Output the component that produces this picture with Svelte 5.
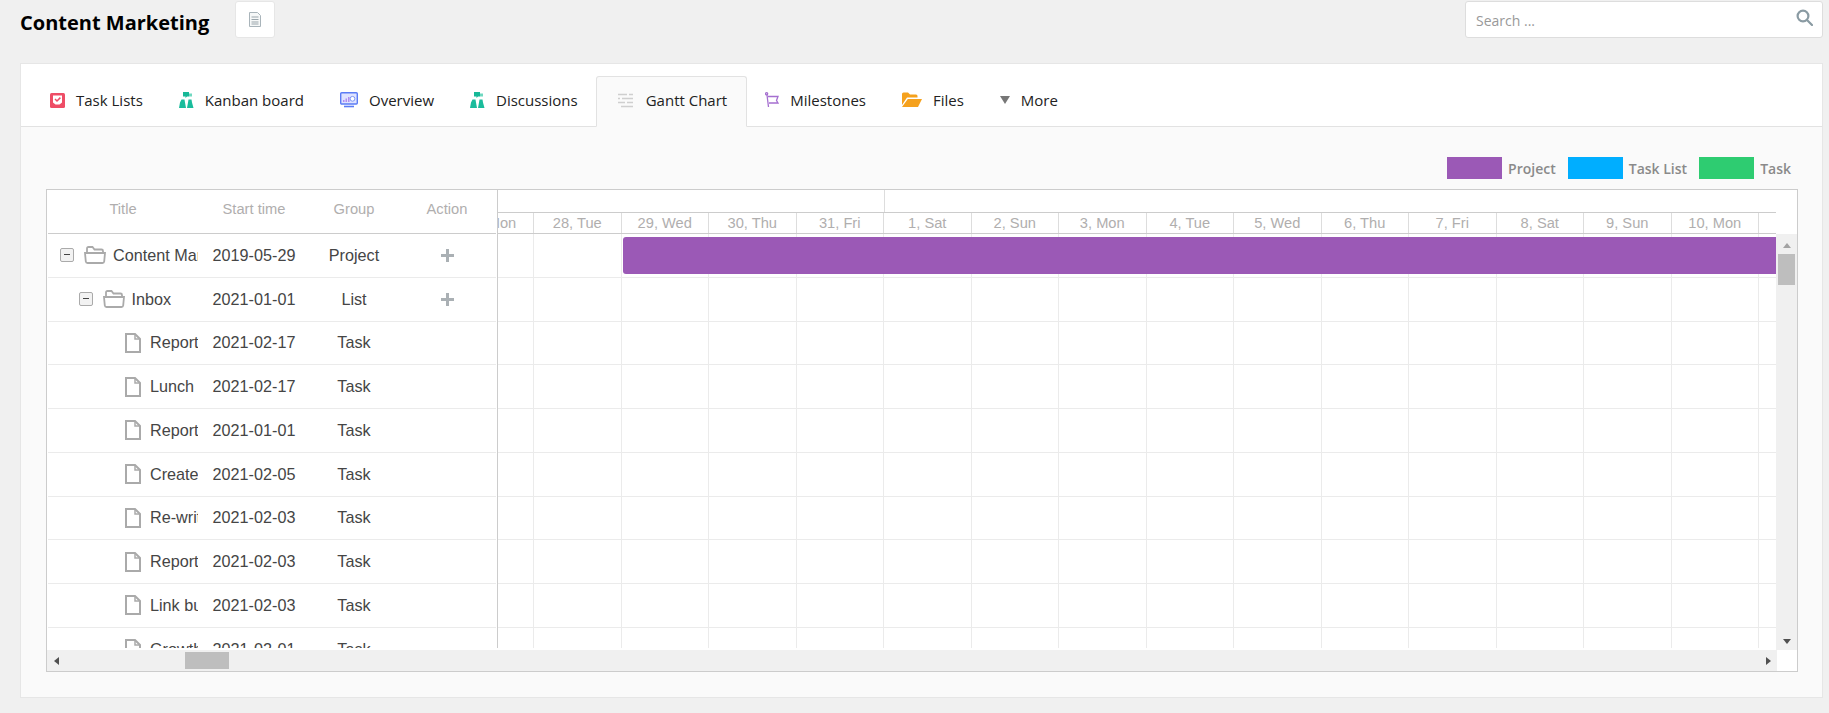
<script>
    const tabs = [
        { label: "Task Lists", icon: "check", w: 15 },
        { label: "Kanban board", icon: "team", w: 15 },
        { label: "Overview", icon: "screen", w: 18 },
        { label: "Discussions", icon: "team", w: 15 },
        { label: "Gantt Chart", icon: "gantt", w: 19, active: true },
        { label: "Milestones", icon: "flag", w: 14 },
        { label: "Files", icon: "folder", w: 20 },
        { label: "More", icon: "more", w: 10 }
    ];

    const legend = [
        { label: "Project", color: "#9b59b6" },
        { label: "Task List", color: "#00aeff" },
        { label: "Task", color: "#2ecc71" }
    ];

    const days = [
        "27, Mon", "28, Tue", "29, Wed", "30, Thu", "31, Fri", "1, Sat", "2, Sun", "3, Mon",
        "4, Tue", "5, Wed", "6, Thu", "7, Fri", "8, Sat", "9, Sun", "10, Mon", "11, Tue"
    ];

    const rows = [
        { title: "Content Marketing", date: "2019-05-29", group: "Project", level: 0, parent: true },
        { title: "Inbox", date: "2021-01-01", group: "List", level: 1, parent: true },
        { title: "Report on sales", date: "2021-02-17", group: "Task", level: 2 },
        { title: "Lunch", date: "2021-02-17", group: "Task", level: 2 },
        { title: "Report on sales", date: "2021-01-01", group: "Task", level: 2 },
        { title: "Create content", date: "2021-02-05", group: "Task", level: 2 },
        { title: "Re-write copy", date: "2021-02-03", group: "Task", level: 2 },
        { title: "Report on sales", date: "2021-02-03", group: "Task", level: 2 },
        { title: "Link building", date: "2021-02-03", group: "Task", level: 2 },
        { title: "Growth plan", date: "2021-02-01", group: "Task", level: 2 }
    ];
</script>

<div class="top">
    <h1>Content Marketing</h1>
    <button class="doc-btn" aria-label="Description">
        <svg width="12" height="15" viewBox="0 0 12 15">
            <path d="M.5.5h8l3 3v11H.5z" fill="#f6f8f8" stroke="#a9b4ba" />
            <path d="M2.5 5h7M2.5 7.5h7M2.5 10h7M2.5 12h7" stroke="#9aa5ab" />
        </svg>
    </button>
    <div class="search">
        <span class="placeholder">Search ...</span>
        <svg width="17" height="17" viewBox="0 0 17 17" fill="none" stroke="#8a9ba3" stroke-width="2.2">
            <circle cx="7" cy="7" r="5.4" />
            <path d="M11 11l5 5" stroke-linecap="round" />
        </svg>
    </div>
</div>

<div class="panel">
    <nav class="tabs">
        {#each tabs as tab}
            <div class="tab" class:active={tab.active}>
                <span class="tab-icon" style="width: {tab.w}px">
                    {#if tab.icon === "check"}
                        <svg width="15" height="15" viewBox="0 0 15 15">
                            <rect width="15" height="15" rx="1.5" fill="#ee4d66" />
                            <path d="M3 2.5h9v7l-2.5 2h-4l-2.5-2z" fill="#fff" />
                            <path d="M5 6l2 2 3.4-3.4" fill="none" stroke="#ee4d66" stroke-width="1.5" />
                        </svg>
                    {:else if tab.icon === "team"}
                        <svg width="15" height="16" viewBox="0 0 15 16">
                            <path d="M4 0h6v4.5H8L6.5 6V4.5H4z" fill="#17b897" />
                            <path d="M10 1.5h3v3h-3z" fill="#6fd8c0" />
                            <path d="M2.5 7.5h3l.5 3 1 5.5H0l1-5.500zM9.500 7.500h3l.5 3 1.500 5.500H8l1-5.500z" fill="#1abc9c" />
                        </svg>
                    {:else if tab.icon === "screen"}
                        <svg width="18" height="16" viewBox="0 0 18 16">
                            <rect x=".7" y=".7" width="16.600" height="11.300" rx="1" fill="#dfe3ff" stroke="#5b7cf5" stroke-width="1.400" />
                            <path d="M3 10V8h1.500v2zM5.500 10V6.500H7V10zM8 10V5h1.500v5z" fill="#b08cf0" />
                            <circle cx="12.500" cy="6.800" r="2.400" fill="#fff" stroke="#7d96f5" />
                            <path d="M4 14.500h10" stroke="#5b7cf5" stroke-width="1.600" />
                        </svg>
                    {:else if tab.icon === "gantt"}
                        <svg width="15" height="15" viewBox="0 0 15 15" stroke="#cfcfcf" stroke-width="1.600">
                            <path d="M0 1.500h9M11 1.500h4M4 5.500h11M0 5.500h2M0 9.500h7M9 9.500h6M3 13.500h12" />
                        </svg>
                    {:else if tab.icon === "flag"}
                        <svg width="14" height="16" viewBox="0 0 14 16" fill="none" stroke="#a56fd0" stroke-width="1.300">
                            <circle cx="1.600" cy="1.800" r="1.100" />
                            <path d="M2 3l1.500 12M3 4.500h10l-1.500 4 1.500 2.500H4" />
                        </svg>
                    {:else if tab.icon === "folder"}
                        <svg width="20" height="16" viewBox="0 0 20 16">
                            <path d="M0 2a1.500 1.500 0 0 1 1.500-1.500h4.500l2 2h6a1.500 1.500 0 0 1 1.500 1.500v1.500H5L0 13z" fill="#f5a11d" />
                            <path d="M5.800 7H20l-4 8H0z" fill="#f5a11d" />
                        </svg>
                    {:else}
                        <svg width="10" height="8" viewBox="0 0 10 8"><path d="M0 0h10L5 8z" fill="#777" /></svg>
                    {/if}
                </span>
                <span>{tab.label}</span>
            </div>
        {/each}
    </nav>

    <div class="content">
        <div class="legend">
            {#each legend as item}
                <span class="swatch" style="background: {item.color}"></span>
                <span class="legend-label">{item.label}</span>
            {/each}
        </div>

        <div class="gantt">
            <div class="gantt-body">
                <div class="grid">
                    <div class="grid-head">
                        <div class="c-title">Title</div>
                        <div class="c-date">Start time</div>
                        <div class="c-group">Group</div>
                        <div class="c-action">Action</div>
                    </div>
                    <div class="grid-rows">
                        {#each rows as row}
                            <div class="grid-row">
                                <div class="c-title tree level-{row.level}">
                                    {#if row.parent}
                                        <span class="toggle"></span>
                                        <svg class="ico-folder" width="22" height="18" viewBox="0 0 22 18" fill="none" stroke="#aaa" stroke-width="1.800">
                                            <path d="M3 7V2.500q0-1.500 1.500-1.500h4l2 2.500h7q1.500 0 1.500 1.500V7" />
                                            <path d="M1 7h20l-.8 8.500q-.2 1.500-1.700 1.500H3.500q-1.500 0-1.700-1.500z" />
                                        </svg>
                                    {:else}
                                        <svg class="ico-file" width="16" height="20" viewBox="0 0 16 20" fill="none" stroke="#aaa" stroke-width="2">
                                            <path d="M1 1h9l5 5v13H1z" />
                                            <path d="M10 1v5h5" stroke-width="1.500" />
                                        </svg>
                                    {/if}
                                    <span class="name">{row.title}</span>
                                </div>
                                <div class="c-date">{row.date}</div>
                                <div class="c-group">{row.group}</div>
                                <div class="c-action">
                                    {#if row.parent}
                                        <svg width="13" height="13" viewBox="0 0 13 13"><path d="M5 0h3v5h5v3H8v5H5V8H0V5h5z" fill="#aab0b4" /></svg>
                                    {/if}
                                </div>
                            </div>
                        {/each}
                    </div>
                </div>

                <div class="timeline">
                    <div class="scale">
                        <div class="months">
                            <div class="month first"></div>
                            <div class="month"></div>
                        </div>
                        <div class="days">
                            {#each days as day}
                                <div class="day">{day}</div>
                            {/each}
                        </div>
                    </div>
                    <div class="tl-rows">
                        {#each rows as row, i}
                            <div class="tl-row">
                                {#each days as day}
                                    <div class="tl-cell"></div>
                                {/each}
                                {#if i === 0}
                                    <div class="bar"></div>
                                {/if}
                            </div>
                        {/each}
                    </div>
                </div>

                <div class="vscroll">
                    <div class="vtrack">
                        <span class="arrow up"></span>
                        <span class="vthumb"></span>
                        <span class="arrow down"></span>
                    </div>
                </div>
            </div>

            <div class="hscroll">
                <div class="htrack">
                    <span class="arrow left"></span>
                    <span class="hthumb"></span>
                    <span class="arrow right"></span>
                </div>
            </div>
        </div>
    </div>
</div>

<style>
    :global(body) {
        margin: 0;
        background: #f0f0f0;
    }

    .top {
        display: flex;
        align-items: flex-start;
        height: 63px;
        box-sizing: border-box;
        padding: 1px 6px 0 20px;
        font-family: "Open Sans", sans-serif;
    }
    h1 {
        margin: 0;
        font-size: 20px;
        font-weight: 700;
        line-height: 44px;
        color: #000;
    }
    .doc-btn {
        display: flex;
        align-items: center;
        justify-content: center;
        width: 40px;
        height: 37px;
        margin-left: 26px;
        padding: 0;
        background: #fff;
        border: 1px solid #e6e6e6;
        border-radius: 3px;
    }
    .search {
        display: flex;
        justify-content: space-between;
        align-items: flex-start;
        box-sizing: border-box;
        width: 358px;
        height: 37px;
        margin-left: auto;
        padding: 7px 9px 0 10px;
        background: #fff;
        border: 1px solid #ddd;
        border-radius: 3px;
    }
    .placeholder {
        font-size: 14px;
        color: #999;
        line-height: 24px;
    }

    .panel {
        box-sizing: border-box;
        width: 1803px;
        height: 635px;
        margin-left: 20px;
        border: 1px solid #e6e6e6;
        background: #fff;
    }

    .tabs {
        display: flex;
        align-items: flex-end;
        box-sizing: border-box;
        height: 63px;
        padding-left: 11px;
        border-bottom: 1px solid #e2e2e2;
        font-family: "Open Sans", sans-serif;
        font-size: 15px;
        color: #222;
    }
    .tab {
        display: flex;
        align-items: center;
        gap: 11px;
        box-sizing: border-box;
        height: 51px;
        padding: 0 18px 3px;
        margin-bottom: -1px;
    }
    .tab.active {
        padding: 0 19px 3px;
        background: #fafafa;
        border: 1px solid #e2e2e2;
        border-bottom: 1px solid #fafafa;
        border-radius: 3px 3px 0 0;
    }
    .tab-icon {
        display: flex;
        justify-content: center;
    }

    .content {
        box-sizing: border-box;
        height: 570px;
        padding: 30px 24px 0 25px;
        background: #fafafa;
    }
    .legend {
        display: flex;
        justify-content: flex-end;
        align-items: center;
        height: 22px;
        padding-right: 7px;
        margin-bottom: 10px;
        font-family: "Open Sans", sans-serif;
        font-size: 14px;
        font-weight: 600;
        color: #8a8a8a;
    }
    .swatch {
        width: 55px;
        height: 22px;
        margin-right: 6px;
    }
    .legend-label {
        margin-right: 12px;
    }
    .legend-label:last-child {
        margin-right: 0;
    }

    .gantt {
        box-sizing: border-box;
        width: 1752px;
        height: 483px;
        background: #fff;
        border: 1px solid #ccc;
        font-family: "Liberation Sans", Arial, sans-serif;
    }
    .gantt-body {
        display: flex;
        height: 460px;
    }

    .grid {
        flex: none;
        box-sizing: border-box;
        width: 451px;
        height: 458px;
        padding-left: 1px;
        border-right: 1px solid #ccc;
    }
    .grid-head {
        display: flex;
        align-items: center;
        box-sizing: border-box;
        height: 44px;
        margin-right: 1px;
        border-bottom: 1px solid #ccc;
        padding-bottom: 5px;
        font-size: 14.7px;
        color: #b0aeae;
        text-align: center;
    }
    .grid-rows {
        height: 414px;
        overflow: hidden;
    }
    .grid-row {
        display: flex;
        align-items: center;
        box-sizing: border-box;
        height: 43.75px;
        margin-right: 1px;
        border-bottom: 1px solid #ebebeb;
        font-size: 16.2px;
        color: #454545;
        text-align: center;
    }
    .c-title {
        width: 150px;
        flex: none;
    }
    .c-date {
        width: 112px;
        flex: none;
    }
    .c-group {
        width: 88px;
        flex: none;
    }
    .c-action {
        width: 98px;
        flex: none;
        display: flex;
        justify-content: center;
    }
    .tree {
        display: flex;
        align-items: center;
        overflow: hidden;
        white-space: nowrap;
        text-align: left;
        box-sizing: border-box;
    }
    .level-0 {
        padding-left: 12px;
    }
    .level-1 {
        padding-left: 30.5px;
    }
    .level-2 {
        padding-left: 77px;
    }
    .toggle {
        position: relative;
        flex: none;
        box-sizing: border-box;
        width: 14px;
        height: 14px;
        margin-right: 10px;
        background: #f2f2f2;
        border: 1.5px solid #aaa;
        border-radius: 2px;
    }
    .toggle::after {
        content: "";
        position: absolute;
        left: 3px;
        right: 3px;
        top: 4.5px;
        height: 1.5px;
        background: #444;
    }
    .ico-folder {
        flex: none;
        margin-right: 7px;
    }
    .ico-file {
        flex: none;
        margin-right: 9px;
    }

    .timeline {
        flex: none;
        width: 1278px;
        overflow: hidden;
    }
    .scale {
        height: 44px;
        box-sizing: border-box;
        border-bottom: 1px solid #ccc;
    }
    .months {
        display: flex;
        height: 23px;
        box-sizing: border-box;
        border-bottom: 1px solid #ccc;
    }
    .month {
        flex: 1;
    }
    .month.first {
        flex: none;
        width: 386px;
        border-right: 1px solid #ddd;
    }
    .days {
        display: flex;
        margin-left: -51.5px;
        height: 20px;
    }
    .day {
        flex: none;
        box-sizing: border-box;
        width: 87.5px;
        border-right: 1px solid #ddd;
        font-size: 14.67px;
        line-height: 20px;
        color: #b0aeae;
        text-align: center;
    }
    .tl-rows {
        height: 414px;
        overflow: hidden;
    }
    .tl-row {
        position: relative;
        display: flex;
        box-sizing: border-box;
        height: 43.75px;
        margin-left: -51.5px;
        border-bottom: 1px solid #ebebeb;
    }
    .tl-cell {
        flex: none;
        box-sizing: border-box;
        width: 87.5px;
        border-right: 1px solid #ebebeb;
    }
    .bar {
        position: absolute;
        left: 176.5px;
        right: 0;
        top: 3px;
        height: 37px;
        background: #9b59b6;
        border-radius: 3px 0 0 3px;
    }

    .vscroll {
        flex: 1;
        padding-top: 44px;
        height: 416px;
    }
    .vtrack {
        display: flex;
        flex-direction: column;
        align-items: center;
        height: 416px;
        background: #f0f0f0;
        padding-top: 9px;
        box-sizing: border-box;
    }
    .vthumb {
        width: 17px;
        height: 31px;
        margin-top: 6px;
        background: #bebebe;
    }
    .hscroll {
        height: 21px;
    }
    .htrack {
        display: flex;
        align-items: center;
        width: 1730px;
        height: 21px;
        background: #f0f0f0;
    }
    .hthumb {
        width: 44px;
        height: 17px;
        margin-left: 126px;
        background: #bebebe;
    }
    .arrow {
        flex: none;
        width: 0;
        height: 0;
        border-style: solid;
    }
    .arrow.up {
        border-width: 0 4.5px 5px;
        border-color: transparent transparent #a3a3a3;
    }
    .arrow.down {
        margin-top: auto;
        margin-bottom: 6px;
        border-width: 5px 4.5px 0;
        border-color: #505050 transparent transparent;
    }
    .arrow.left {
        margin-left: 7px;
        border-width: 4.5px 5px 4.5px 0;
        border-color: transparent #505050 transparent transparent;
    }
    .arrow.right {
        margin-left: auto;
        margin-right: 6px;
        border-width: 4.5px 0 4.5px 5px;
        border-color: transparent transparent transparent #505050;
    }
</style>
